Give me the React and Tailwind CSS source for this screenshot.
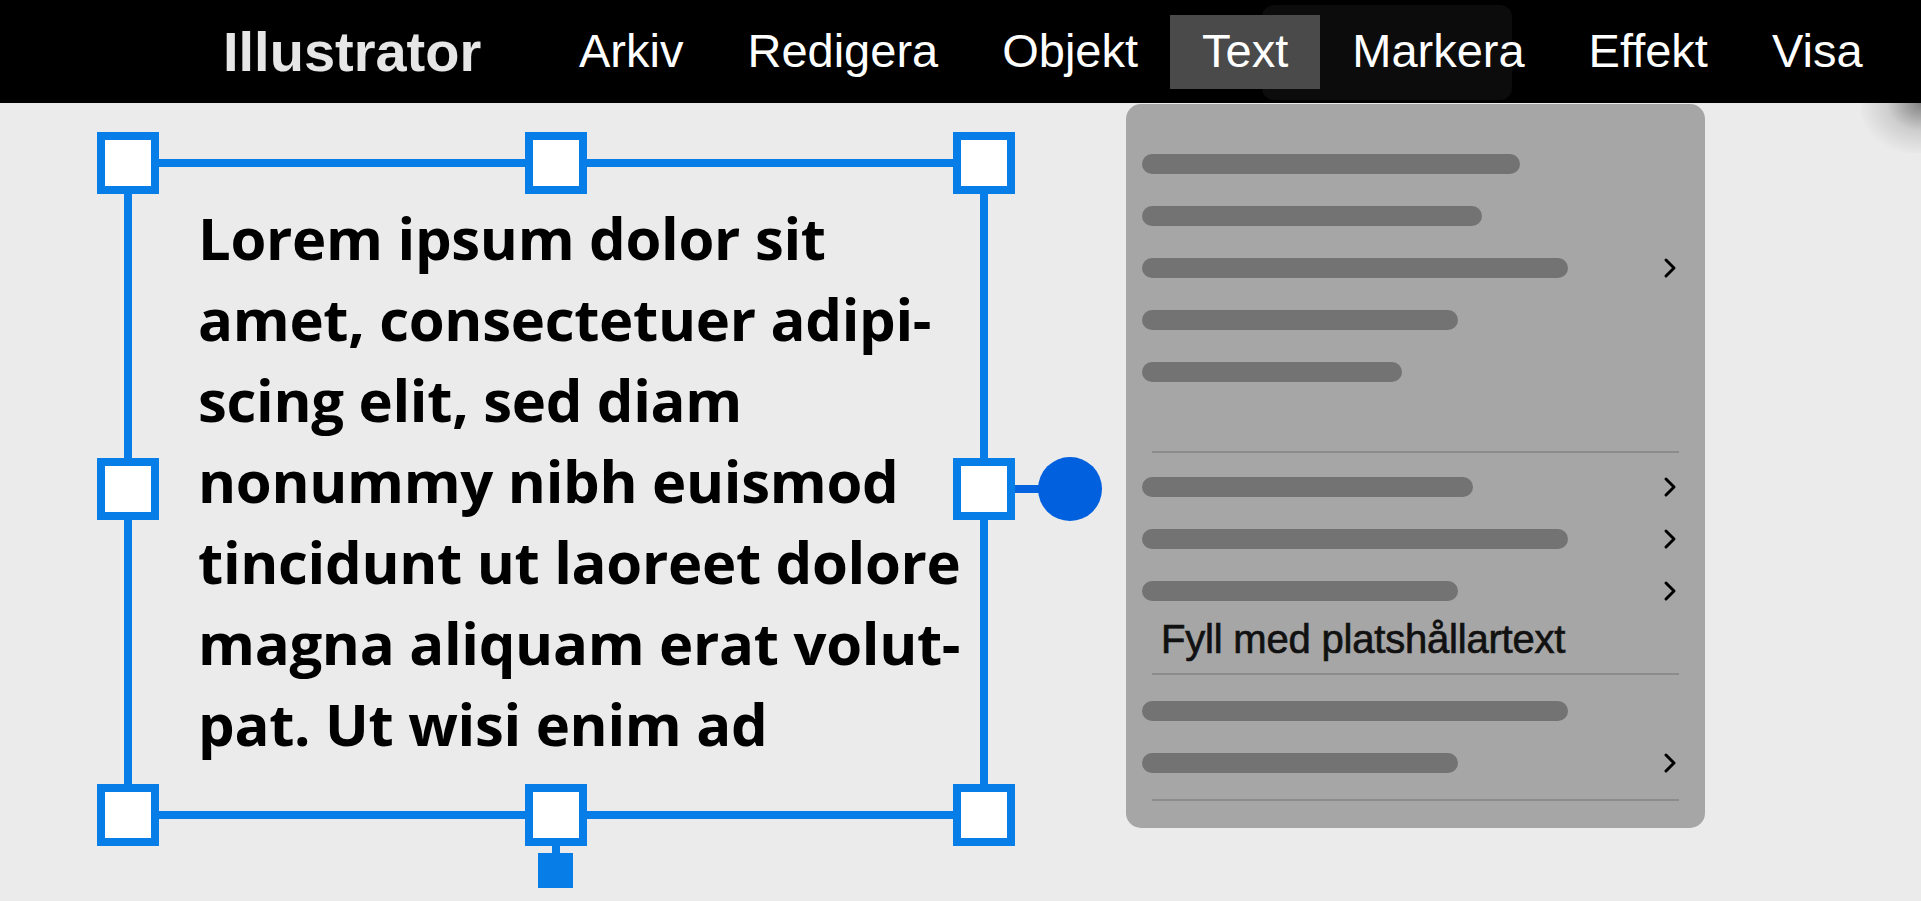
import React from "react";

const menuItems = ["Arkiv", "Redigera", "Objekt", "Text", "Markera", "Effekt", "Visa"];

const loremLines = [
  "Lorem ipsum dolor sit",
  "amet, consectetuer adipi-",
  "scing elit, sed diam",
  "nonummy nibh euismod",
  "tincidunt ut laoreet dolore",
  "magna aliquam erat volut-",
  "pat. Ut wisi enim ad",
];

// handle positions relative to the frame's padding box
const handles = [
  { x: -35, y: -35 },
  { x: 393, y: -35 },
  { x: 821, y: -35 },
  { x: -35, y: 291 },
  { x: 821, y: 291 },
  { x: -35, y: 617 },
  { x: 393, y: 617 },
  { x: 821, y: 617 },
];

const Chevron = () => (
  <svg width="16" height="22" viewBox="0 0 16 22" className="shrink-0">
    <polyline points="4,3 12,11 4,19" fill="none" stroke="#000" strokeWidth="3" strokeLinecap="round" strokeLinejoin="round" />
  </svg>
);

const Bar = ({ w, arrow }) => (
  <div className="flex items-center h-[52px] pl-[16px] pr-[27px]">
    <div className="h-[20px] rounded-full bg-[#737373]" style={{ width: w }} />
    <div className="flex-1" />
    {arrow && <Chevron />}
  </div>
);

const Sep = ({ className }) => <div className={"mx-[26px] h-[2px] bg-[#8c8c8c] " + (className || "")} />;

const App = () => {
  return (
    <div className="relative w-full h-[901px] overflow-hidden bg-[#ebebeb]">
      {/* menu bar */}
      <div className="relative flex items-center h-[103px] bg-black font-['Liberation_Sans',Arial,sans-serif]">
        <div className="absolute left-[1262px] top-[5px] w-[250px] h-[95px] rounded-[12px] bg-[#0c0c0c]" />
        <div className="relative pl-[223px] w-[547px] shrink-0">
          <span className="text-[56px] leading-none font-bold text-[#e6e6e6]">Illustrator</span>
        </div>
        <ul className="relative flex items-center">
          {menuItems.map((item) => (
            <li
              key={item}
              className={
                item === "Text"
                  ? "flex items-center h-[74px] px-[32px] bg-[#4a4a4a] text-[47px] text-white"
                  : "flex items-center h-[74px] px-[32px] text-[47px] text-white"
              }
            >
              {item}
            </li>
          ))}
        </ul>
      </div>

      {/* corner shadow */}
      <div className="absolute right-0 top-[103px] w-[60px] h-[50px] bg-[radial-gradient(ellipse_at_top_right,rgba(0,0,0,0.45)_0%,rgba(0,0,0,0.12)_40%,rgba(0,0,0,0)_75%)]" />

      {/* canvas: selected text frame */}
      <div className="relative ml-[124px] mt-[56px] w-[864px] h-[660px] border-[8px] border-[#077de8]">
        <div className="pl-[66px] pt-[30px] font-['Open_Sans',sans-serif] font-bold text-[58px] leading-[81px] tracking-[-0.3px] text-black whitespace-nowrap">
          {loremLines.map((l) => (
            <div key={l}>{l}</div>
          ))}
        </div>

        {handles.map((h, i) => (
          <div
            key={i}
            className="absolute w-[62px] h-[62px] bg-white border-[8px] border-[#077de8]"
            style={{ left: h.x, top: h.y }}
          />
        ))}

        <div className="absolute left-[883px] top-[318px] w-[26px] h-[8px] bg-[#0563df]" />
        <div className="absolute left-[906px] top-[290px] w-[64px] h-[64px] rounded-full bg-[#0060dd]" />

        <div className="absolute left-[420px] top-[679px] w-[8px] h-[8px] bg-[#077de8]" />
        <div className="absolute left-[406px] top-[686px] w-[35px] h-[35px] bg-[#077de8]" />
      </div>

      {/* Text menu dropdown */}
      <div className="absolute left-[1126px] top-[104px] w-[579px] h-[724px] rounded-[15px] bg-[#a6a6a6] overflow-hidden font-['Liberation_Sans',Arial,sans-serif]">
        <div className="pt-[34px]">
          <Bar w={378} />
          <Bar w={340} />
          <Bar w={426} arrow />
          <Bar w={316} />
          <Bar w={260} />
        </div>
        <Sep className="mt-[53px]" />
        <div className="mt-[8px]">
          <Bar w={331} arrow />
          <Bar w={426} arrow />
          <Bar w={316} arrow />
        </div>
        <div className="h-[43px] flex items-center pl-[35px] text-[40px] text-[#111] tracking-[-0.2px] [-webkit-text-stroke:0.7px_#111]">
          Fyll med platshållartext
        </div>
        <Sep className="mt-[13px]" />
        <div className="mt-[10px]">
          <Bar w={426} />
          <Bar w={316} arrow />
        </div>
        <Sep className="mt-[10px]" />
      </div>
    </div>
  );
};

export default App;
